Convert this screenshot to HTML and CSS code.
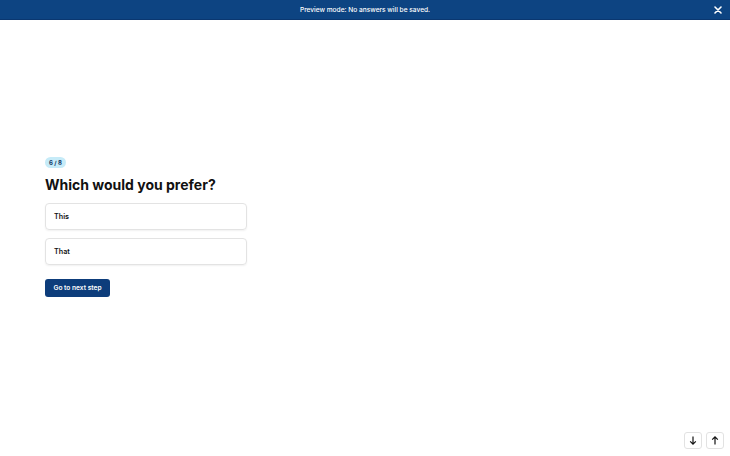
FILE: index.html
```html
<!DOCTYPE html>
<html>
<head>
<meta charset="utf-8">
<link rel="stylesheet" href="styles.css">
</head>
<body>
<div class="banner">
  <span class="banner-text">Preview mode: No answers will be saved.</span>
  <button class="banner-close" aria-label="Close">
    <svg width="8" height="8" viewBox="0 0 8 8"><path d="M1 1L7 7M7 1L1 7" stroke="#fff" stroke-width="1.6" stroke-linecap="round"/></svg>
  </button>
</div>
<main class="page">
  <section class="question">
    <span class="badge">6 / 8</span>
    <h1 class="title">Which would you prefer?</h1>
    <div class="options">
      <div class="option">This</div>
      <div class="option">That</div>
    </div>
    <button class="next">Go to next step</button>
  </section>
</main>
<div class="nav">
  <button class="nav-btn" aria-label="Down">
    <svg width="8" height="9" viewBox="0 0 8 9"><path d="M4 0.5V8M1.2 5.3L4 8.1L6.8 5.3" stroke="#111" stroke-width="1.2" fill="none"/></svg>
  </button>
  <button class="nav-btn" aria-label="Up">
    <svg width="8" height="9" viewBox="0 0 8 9"><path d="M4 8.5V1M1.2 3.7L4 0.9L6.8 3.7" stroke="#111" stroke-width="1.2" fill="none"/></svg>
  </button>
</div>
</body>
</html>
```
FILE: styles.css
```css
* { box-sizing: border-box; }
html, body { margin: 0; padding: 0; }
body {
  font-family: Inter, "Liberation Sans", sans-serif;
  background: #fff;
  color: #111;
  width: 730px;
  height: 456px;
  position: relative;
  overflow: hidden;
}
.banner {
  height: 20px;
  background: #0d4482;
  display: flex;
  align-items: center;
  justify-content: center;
  position: relative;
  border-bottom: 1px solid #0a3770;
}
.banner-text {
  color: #fff;
  font-size: 6.6px;
  font-weight: 500;
}
.banner-close {
  position: absolute;
  right: 8px;
  top: 6px;
  width: 8px;
  height: 8px;
  padding: 0;
  border: 0;
  background: none;
  display: flex;
}
.page {
  padding: 137px 0 0 45px;
}
.question {
  width: 202px;
  display: flex;
  flex-direction: column;
  align-items: flex-start;
}
.badge {
  background: #c6ebf8;
  color: #133a66;
  font-size: 6px;
  font-weight: 700;
  line-height: 11px;
  height: 11px;
  padding: 0 4px;
  border-radius: 6px;
}
.title {
  margin: 8px 0 0 0;
  font-size: 14px;
  line-height: 18px;
  font-weight: 700;
  color: #111;
}
.options {
  margin-top: 9px;
  width: 202px;
  display: flex;
  flex-direction: column;
  gap: 8px;
}
.option {
  height: 27px;
  border: 1px solid #e3e3e3;
  border-radius: 4px;
  box-shadow: 0 1px 2px rgba(0,0,0,0.06);
  padding: 0 8px;
  display: flex;
  align-items: center;
  font-size: 7.2px;
  font-weight: 600;
  color: #111;
}
.next {
  margin-top: 14px;
  height: 18px;
  width: 65px;
  padding: 0;
  border: 0;
  border-radius: 3px;
  background: #0d3d7b;
  color: #fff;
  font-family: inherit;
  font-size: 6.6px;
  font-weight: 600;
}
.nav {
  position: absolute;
  right: 6px;
  bottom: 7px;
  display: flex;
  gap: 4px;
}
.nav-btn {
  width: 18px;
  height: 17px;
  padding: 0;
  border: 1px solid #e2e2e2;
  border-radius: 3px;
  background: #fff;
  display: flex;
  align-items: center;
  justify-content: center;
}
```
